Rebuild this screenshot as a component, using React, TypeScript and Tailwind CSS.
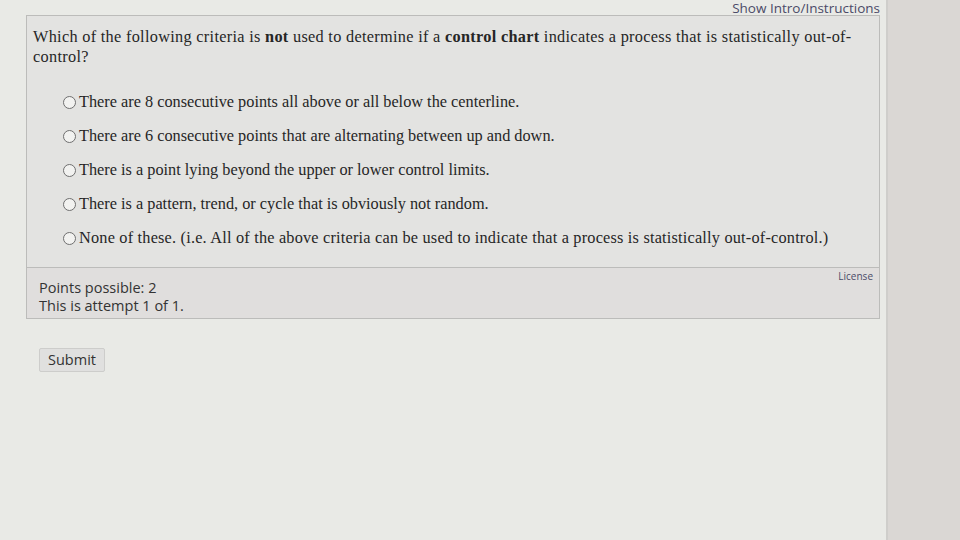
import React from "react";

const options = [
  "There are 8 consecutive points all above or all below the centerline.",
  "There are 6 consecutive points that are alternating between up and down.",
  "There is a point lying beyond the upper or lower control limits.",
  "There is a pattern, trend, or cycle that is obviously not random.",
  "None of these. (i.e. All of the above criteria can be used to indicate that a process is statistically out-of-control.)",
];

export default function App() {
  return (
    <div className="w-[960px] h-[540px] flex bg-[#dad7d4] overflow-hidden">
      <div className="w-[888px] h-full bg-[#e9eae6] border-r-2 border-[#cfcecb] pl-[26px] pr-[6px] flex flex-col">
        <div
          className="flex justify-end items-end h-[15px] pt-[1px] text-[13.5px] leading-[14px] text-[#4b4b68]"
          style={{ fontFamily: '"Open Sans", "Liberation Sans", sans-serif' }}
        >
          Show Intro/Instructions
        </div>
        <div className="w-[854px] border border-[#bcbcba] flex flex-col">
          <div
            className="h-[251px] bg-[#e3e3e1] px-[6px] pt-[11px] text-[16.3px] leading-[20px] text-[#262626]"
            style={{ fontFamily: '"Liberation Serif", "Times New Roman", serif' }}
          >
            <p className="tracking-[0.3px]">
              <span className="whitespace-nowrap">
                Which of the following criteria is <b>not</b> used to determine if a{" "}
                <b>control chart</b> indicates a process that is statistically out-of-
              </span>
              <br />
              control?
            </p>
            <div className="mt-[25px] pl-[30px] flex flex-col gap-[14px]">
              {options.map((o, i) => (
                <div key={o} className="flex items-center gap-[3px]">
                  <span className="w-[13px] h-[13px] rounded-full border border-[#6f6f6f] bg-[#f2f2f0] shrink-0" />
                  <span className={i === 4 ? "whitespace-nowrap tracking-[0.2px]" : "whitespace-nowrap"}>{o}</span>
                </div>
              ))}
            </div>
          </div>
          <div
            className="h-[51px] border-t border-[#bcbcba] bg-[#e0dedd] pl-[12px] pr-[6px] pt-[2px] text-[#333]"
            style={{ fontFamily: '"Open Sans", "Liberation Sans", sans-serif' }}
          >
            <div className="flex justify-end text-[10px] leading-[12px] text-[#4b4b68]">License</div>
            <div className="text-[14.5px] leading-[18px] -mt-[3px]">Points possible: 2</div>
            <div className="text-[14.5px] leading-[18px]">This is attempt 1 of 1.</div>
          </div>
        </div>
        <div className="pl-[13px] pt-[28px]">
          <button
            className="h-[24px] px-[8px] bg-[#e0e0df] border border-[#cdcdcb] rounded-[2px] text-[14.5px] leading-[20px] text-[#333]"
            style={{ fontFamily: '"Open Sans", "Liberation Sans", sans-serif' }}
          >
            Submit
          </button>
        </div>
      </div>
    </div>
  );
}
